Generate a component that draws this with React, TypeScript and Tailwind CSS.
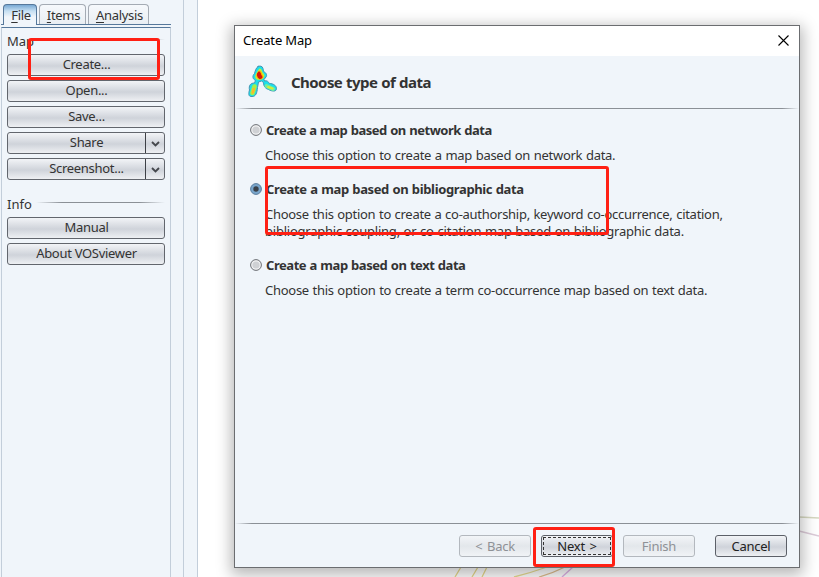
import { clsx } from "clsx";

const TABS = [
  { label: "File", width: "w-[34px]", active: true },
  { label: "Items", width: "w-[47px]", active: false },
  { label: "Analysis", width: "w-[61px]", active: false },
];

const MAP_ACTIONS = [
  { label: "Create...", menu: false },
  { label: "Open...", menu: false },
  { label: "Save...", menu: false },
  { label: "Share", menu: true },
  { label: "Screenshot...", menu: true },
];

const INFO_ACTIONS = [
  { label: "Manual", menu: false },
  { label: "About VOSviewer", menu: false },
];

const OPTIONS = [
  {
    title: "Create a map based on network data",
    titleClass: "tracking-[-0.48px]",
    lines: [{ text: "Choose this option to create a map based on network data.", className: "tracking-[-0.27px]" }],
    checked: false,
    className: "h-[59px]",
  },
  {
    title: "Create a map based on bibliographic data",
    titleClass: "tracking-[-0.36px]",
    lines: [
      { text: "Choose this option to create a co-authorship, keyword co-occurrence, citation,", className: "tracking-[-0.28px]" },
      { text: "bibliographic coupling, or co-citation map based on bibliographic data.", className: "tracking-[-0.23px]" },
    ],
    checked: true,
    className: "h-[76px]",
  },
  {
    title: "Create a map based on text data",
    titleClass: "tracking-[-0.45px]",
    lines: [{ text: "Choose this option to create a term co-occurrence map based on text data.", className: "tracking-[-0.27px]" }],
    checked: false,
    className: "h-[59px]",
  },
];

const METAL = "bg-linear-to-b from-[#f2f4f7] via-[#cfd3da] via-55% to-[#eef0f3]";

function PanelButton({ label, menu }: { label: string; menu: boolean }) {
  return (
    <button
      className={clsx(
        "flex h-[22px] w-[158px] overflow-hidden rounded-[3px] border border-[#62666d] text-[13px] leading-[19px] tracking-[-0.3px] text-[#333]",
        METAL,
      )}
    >
      <span className={clsx("h-full flex-1 text-center", menu ? "pl-5" : "pl-px")}>{label}</span>
      {menu && (
        <span className="flex h-full w-[19px] items-center justify-center border-l border-[#3d4046]">
          <svg width="9" height="6" viewBox="0 0 9 6" fill="none" className="mt-0.5">
            <path d="M1 1l3.500 3.500L8 1" stroke="#44474c" strokeWidth="1.800" />
          </svg>
        </span>
      )}
    </button>
  );
}

function GroupTitle({ label }: { label: string }) {
  return (
    <div className="flex h-[21px] w-[158px] items-start gap-1">
      <span className="text-[13px] leading-4 text-[#333]">{label}</span>
      <span className="mt-[6px] h-px flex-1 bg-[linear-gradient(to_right,transparent,#8b9096_20%,#8b9096_80%,transparent)]" />
    </div>
  );
}

function Radio({ checked }: { checked: boolean }) {
  return (
    <svg width="12" height="12" viewBox="0 0 12 12" className="mt-0.5 shrink-0">
      <circle cx="6" cy="6" r="5.4" fill={checked ? "#78a5cb" : "#f0f1f2"} stroke={checked ? "#5b7d9d" : "#6c6f74"} />
      {checked ? (
        <circle cx="6" cy="6" r="2.7" fill="#3a4048" />
      ) : (
        <circle cx="6" cy="6" r="3.6" fill="#cfd1d4" />
      )}
    </svg>
  );
}

function Logo() {
  return (
    <svg width="30" height="34" viewBox="0 0 30 34">
      <defs>
        <filter id="soft" x="-10%" y="-10%" width="120%" height="120%">
          <feGaussianBlur stdDeviation="0.5" />
        </filter>
      </defs>
      <g strokeLinejoin="round" strokeLinecap="round">
        <path
          d="M10 1.500C12 .5 14.500 1 15 3.500L15.500 6.500C18 7.500 19.500 10 18 12L16 14.500L16.500 16C19 15 20.500 17 21.500 18.500C25 18.500 28.500 20.500 28.500 23.500C28.500 27 24 26.500 20.500 24.500C17 23.500 15.500 21 15.500 17.500L13.500 16L10.500 17L9.500 22.500C9 28 8 31.500 4 31.500C0 32 .5 28 1.500 25C.5 20.500 2.500 18 6.500 18L7.500 15.500C4.500 14 4 11 6.500 8.500C7.500 5 8 3 10 1.500Z"
          fill="#1ce0ea"
          stroke="#4496b4"
        />
        <g filter="url(#soft)">
          <path d="M11.500 3.500C14 3.500 13.500 6.500 15.500 8.500S16 13 14.500 14S8.500 15.500 7.500 13S9.500 6 11.500 3.500Z" fill="#c8f032" />
          <path d="M11.500 5.500C14 6 13.500 8.500 15 10.500S14 14.500 12 14.500S7.500 12 8.500 9Z" fill="#ffab00" />
          <path d="M10.500 6.500C13 6.500 12.500 9 14 11S13 14 12 14S8.500 11.500 9 8.500Z" fill="#d41208" />
          <path d="M6.500 21.500L4.500 28" stroke="#a4f04c" strokeWidth="4.500" />
          <path d="M5.800 24L4.800 27.500" stroke="#ffb52b" strokeWidth="2.400" />
          <path d="M18.500 21L25 24" stroke="#72efa0" strokeWidth="4" />
          <path d="M20 22L24.500 23.500" stroke="#d6ec38" strokeWidth="2" />
        </g>
      </g>
    </svg>
  );
}

function Sidebar() {
  return (
    <aside className="flex h-full w-[198px] border-r border-[#c3ceda] bg-[#f0f5fa]">
      <div className="flex w-[171px] flex-col pl-px">
        <div className="flex h-[25px] items-end gap-[2px] border-b border-[#56789b] pl-[2px]">
          {TABS.map((tab) => (
            <div
              key={tab.label}
              className={clsx(
                "rounded-t-[4px] border border-b-0 pl-[2px] text-center text-[13px] tracking-[-0.3px] text-[#333]",
                tab.width,
                tab.active
                  ? "-mb-px h-[21px] border-[#56789b] bg-linear-to-b from-[#78a9d4] via-[#c5dff2] via-30% to-[#f0f5fa] to-60% leading-[21px]"
                  : "h-5 border-[#a4abb4] bg-linear-to-b from-[#f6f9fc] to-[#e9eef3] leading-[21px]",
              )}
            >
              <span className="underline underline-offset-2">{tab.label[0]}</span>
              {tab.label.slice(1)}
            </div>
          ))}
        </div>
        <div className="mt-[2px] flex-1 border-x border-t border-x-[#c3ceda] border-t-[#56789b] pt-[5px] pl-[5px]">
          <GroupTitle label="Map" />
          <div className="flex flex-col gap-1">
            {MAP_ACTIONS.map((action) => (
              <PanelButton key={action.label} {...action} />
            ))}
          </div>
          <div className="pt-4">
            <GroupTitle label="Info" />
          </div>
          <div className="flex flex-col gap-1">
            {INFO_ACTIONS.map((action) => (
              <PanelButton key={action.label} {...action} />
            ))}
          </div>
        </div>
      </div>
      <div className="w-[13px] border-r border-[#c3ceda]" />
    </aside>
  );
}

function DialogButton({ label, disabled, focused }: { label: string; disabled?: boolean; focused?: boolean }) {
  return (
    <button
      className={clsx(
        "h-[22px] w-[72px] rounded-[3px] border p-px text-[13px] leading-4 tracking-[-0.25px] [word-spacing:1.5px]",
        disabled
          ? "border-[#b3b8be] bg-linear-to-b from-[#f2f5f8] via-[#e3e7eb] to-[#f0f3f6] text-[#8e9196]"
          : clsx("border-[#5c6068] text-[#222]", METAL),
      )}
    >
      <span
        className={clsx(
          "block h-[18px] border leading-[16px]",
          focused ? "border-dashed border-[#333]" : "border-transparent",
        )}
      >
        {label}
      </span>
    </button>
  );
}

function CreateMapDialog() {
  return (
    <div className="absolute top-[25px] left-[234px] flex h-[543px] w-[566px] flex-col border border-[#6b6d70] bg-[#f0f5fa] shadow-[0_4px_14px_3px_rgba(0,0,0,0.28)]">
      <div className="flex h-[30px] shrink-0 items-center justify-between bg-white pr-[10px] pl-2">
        <span className="text-[13px] tracking-[-0.15px] text-black">Create Map</span>
        <svg width="11" height="11" viewBox="0 0 11 11" className="mb-px">
          <path d="M.5 .5l10 10M10.500 .5l-10 10" stroke="#000" strokeWidth="1.100" />
        </svg>
      </div>
      <div className="flex h-[52px] shrink-0 items-center gap-[13px] pl-[13px]">
        <Logo />
        <h1 className="pt-px text-[15px] font-bold tracking-[-0.56px] text-[#333] [word-spacing:0.5px]">
          Choose type of data
        </h1>
      </div>
      <div className="h-px shrink-0 bg-[linear-gradient(to_right,transparent,#8b9096_3%,#8b9096_97%,transparent)]" />
      <div className="flex-1 pt-[13px] pl-[15px]">
        {OPTIONS.map((option) => (
          <div key={option.title} className={clsx("flex gap-1", option.className)}>
            <Radio checked={option.checked} />
            <div className="whitespace-nowrap text-[#333] [word-spacing:0.5px]">
              <div className={clsx("text-[13px] leading-[17px] font-bold", option.titleClass)}>{option.title}</div>
              <div className="-ml-px pt-2 text-[13px] leading-[17px]">
                {option.lines.map((line) => (
                  <div key={line.text} className={line.className}>
                    {line.text}
                  </div>
                ))}
              </div>
            </div>
          </div>
        ))}
      </div>
      <div className="h-px shrink-0 bg-[linear-gradient(to_right,transparent,#8b9096_3%,#8b9096_97%,transparent)]" />
      <div className="flex h-[43px] shrink-0 items-start gap-[10px] pt-[11px] pl-[224px]">
        <DialogButton label="< Back" disabled />
        <DialogButton label="Next >" focused />
        <DialogButton label="Finish" disabled />
        <div className="flex pl-[10px]">
          <DialogButton label="Cancel" />
        </div>
      </div>
    </div>
  );
}

export default function App() {
  return (
    <div className="relative flex h-[577px] w-[819px] overflow-hidden bg-white font-['Noto_Sans','Open_Sans',sans-serif]">
      <Sidebar />
      <main className="h-full flex-1">
        <svg width="621" height="577" viewBox="198 0 621 577" fill="none">
          <g opacity="0.7">
            <path d="M455 577l6-10M472 577l6-10M482 577l5-10" stroke="#ddc95a" strokeWidth="1.300" />
            <path d="M514 577q16-4 33-10" stroke="#dfcf65" strokeWidth="1.300" />
            <path d="M539 577q14-4 26-10" stroke="#d2a25e" strokeWidth="1.300" />
            <path d="M562 577l11-10" stroke="#d090dc" strokeWidth="1.300" />
          </g>
          <path d="M799 517l20 1" stroke="#d6d8c0" strokeWidth="1.500" />
          <path d="M799 531l20 5" stroke="#dccbd8" strokeWidth="1.500" />
        </svg>
      </main>
      <CreateMapDialog />
      <div className="absolute top-[38px] left-[28px] h-[42px] w-[132px] rounded-[3px] border-3 border-[#ff2014]" />
      <div className="absolute top-[166px] left-[265px] h-[69px] w-[344px] rounded-[3px] border-3 border-[#ff2014]" />
      <div className="absolute top-[527px] left-[533px] h-10 w-[82px] rounded-[3px] border-3 border-[#ff2014]" />
    </div>
  );
}
